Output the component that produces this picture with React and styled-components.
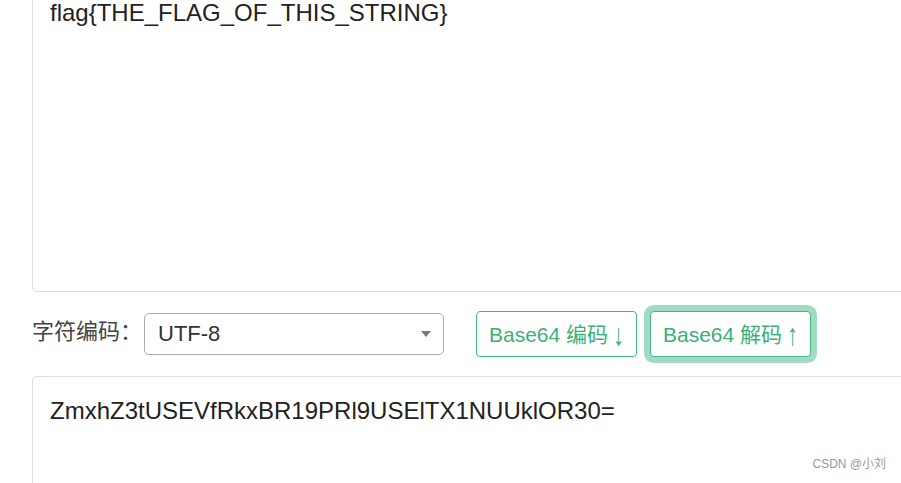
import styled, { createGlobalStyle } from "styled-components";

const GlobalStyle = createGlobalStyle`
  html {
    overflow: hidden;
  }
  html, body {
    margin: 0;
    padding: 0;
    background: #fff;
  }
  body {
    font-family: "Liberation Sans", Arial, "Noto Sans CJK SC", sans-serif;
    color: #333;
  }
`;

const App = () => {
  return (
    <Page>
      <GlobalStyle />
      <TextBox
        $height={314}
        readOnly
        defaultValue="flag{THE_FLAG_OF_THIS_STRING}"
      />
      <ToolRow>
        <Label>字符编码：</Label>
        <SelectBox>
          <span>UTF-8</span>
          <Caret />
        </SelectBox>
        <Buttons>
          <ActionBtn>
            Base64 编码 <Arrow>↓</Arrow>
          </ActionBtn>
          <ActionBtn $focused>
            Base64 解码 <Arrow>↑</Arrow>
          </ActionBtn>
        </Buttons>
      </ToolRow>
      <TextBox
        $height={200}
        $padTop={20}
        readOnly
        defaultValue="ZmxhZ3tUSEVfRkxBR19PRl9USElTX1NUUklOR30="
      />
      <Watermark>CSDN @小刘</Watermark>
    </Page>
  );
};

export default App;

const Page = styled.main`
  position: relative;
  box-sizing: border-box;
  height: 505px;
  overflow: hidden;
  padding-left: 32px;
  margin-top: -22px;
  display: flex;
  flex-direction: column;
`;

const TextBox = styled.textarea`
  display: block;
  box-sizing: border-box;
  width: 900px;
  height: ${(p) => p.$height}px;
  flex-shrink: 0;
  margin: 0;
  padding: ${(p) => p.$padTop || 20}px 17px;
  border: 1px solid #dcdfe6;
  border-radius: 5px;
  font-family: "Liberation Sans", Arial, sans-serif;
  font-size: 24px;
  color: #222;
  resize: none;
  outline: none;
  background: #fff;
`;

const ToolRow = styled.div`
  display: flex;
  align-items: center;
  flex-shrink: 0;
  height: 46px;
  margin: 19px 0 19px;
`;

const Label = styled.span`
  font-family: "Liberation Sans", "Noto Sans CJK SC", sans-serif;
  font-size: 22px;
  line-height: 1;
  margin-top: -4px;
  color: #444;
  width: 112px;
  white-space: nowrap;
`;

const SelectBox = styled.div`
  box-sizing: border-box;
  width: 300px;
  height: 42px;
  border: 1px solid #aaa;
  border-radius: 5px;
  display: flex;
  align-items: center;
  justify-content: space-between;
  padding: 0 12px 0 13px;
  font-size: 22px;
  color: #333;
`;

const Caret = styled.i`
  width: 0;
  height: 0;
  border-left: 5px solid transparent;
  border-right: 5px solid transparent;
  border-top: 6px solid #777;
`;

const Buttons = styled.div`
  display: flex;
  gap: 13px;
  margin-left: 32px;
`;

const ActionBtn = styled.button`
  box-sizing: border-box;
  width: 161px;
  height: 46px;
  padding: 0 10px 3px 12px;
  display: flex;
  align-items: center;
  gap: 5px;
  background: #fff;
  border: 1px solid #42b983;
  border-radius: 4px;
  color: #3bb077;
  font-family: "Liberation Sans", "Noto Sans CJK SC", sans-serif;
  font-size: 21px;
  white-space: nowrap;
  cursor: pointer;
  box-shadow: ${(p) => (p.$focused ? "0 0 0 6px #a0dcc3" : "none")};
`;

const Arrow = styled.span`
  font-family: "Liberation Sans", sans-serif;
  font-size: 22px;
  line-height: 1;
  margin-top: 5px;
  display: inline-block;
  transform: scaleY(1.4);
`;

const Watermark = styled.span`
  position: absolute;
  right: 15px;
  bottom: 12px;
  font-family: "Liberation Sans", "Noto Sans CJK SC", sans-serif;
  font-size: 12px;
  color: #999;
`;
